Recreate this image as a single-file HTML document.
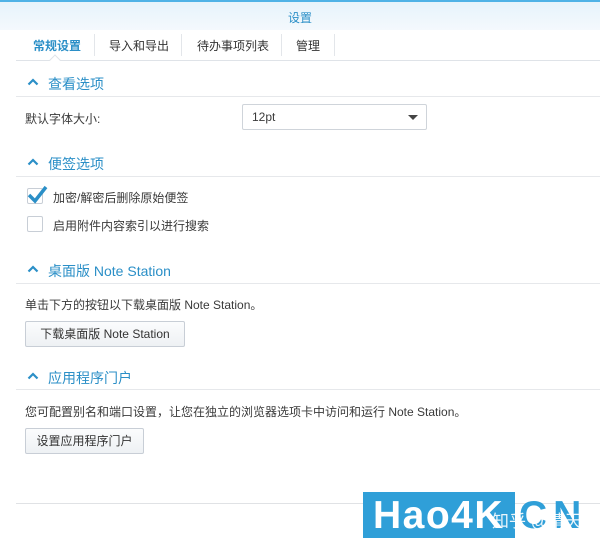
<!DOCTYPE html>
<html><head><meta charset="utf-8"><style>
*{margin:0;padding:0;box-sizing:border-box}
body{width:600px;height:543px;background:#fff;position:relative;overflow:hidden;font-family:"Liberation Sans","Noto Sans CJK SC",sans-serif;color:#3a3a3a;font-size:12px}
.a{position:absolute;white-space:nowrap}
.hdr{left:0;top:0;width:600px;height:30px;background:linear-gradient(#e6f3fb,#f4f9fd);border-top:2px solid #4fb2e6}
.tabs{left:16px;top:32px;width:584px;height:29px;border-bottom:1px solid #dfe3e8}
.tab{top:37px;font-size:12px;color:#333}
.sep{top:34px;width:1px;height:22px;background:#e3e6ea}
.h{font-size:14px;color:#2b8fc7}
.line{left:16px;width:584px;height:1px;background:#e6e8eb}
.btn{border:1px solid #c8ced6;border-radius:2px;background:linear-gradient(#fbfcfd,#eef1f4);height:26px;font-size:12px;color:#333;line-height:24px;text-align:center}
</style></head><body>
<div class="a hdr"></div>
<div class="a" style="left:288px;top:9px;font-size:12px;color:#2b8fc7">设置</div>
<div class="a tabs"></div>
<div class="a tab" style="left:33px;color:#2b8fc7;font-weight:bold">常规设置</div>
<div class="a sep" style="left:94px"></div>
<div class="a tab" style="left:109px">导入和导出</div>
<div class="a sep" style="left:181px"></div>
<div class="a tab" style="left:197px">待办事项列表</div>
<div class="a sep" style="left:281px"></div>
<div class="a tab" style="left:296px">管理</div>
<div class="a sep" style="left:334px"></div>
<div class="a" style="left:51px;top:56px;width:8px;height:8px;background:#fff;border-left:1px solid #dfe3e8;border-top:1px solid #dfe3e8;transform:rotate(45deg)"></div>

<svg class="a" style="left:27px;top:78px" width="12" height="8"><path d="M1.5 6.5 L6 2 L10.5 6.5" stroke="#2b8fc7" stroke-width="2.2" fill="none"/></svg>
<div class="a h" style="left:48px;top:74px">查看选项</div>
<div class="a line" style="top:96px"></div>
<div class="a" style="left:25px;top:110px">默认字体大小:</div>
<div class="a" style="left:242px;top:104px;width:185px;height:26px;border:1px solid #cfd4da;border-radius:2px"></div>
<div class="a" style="left:252px;top:110px;font-size:12px">12pt</div>
<div class="a" style="left:408px;top:115px;border-left:5px solid transparent;border-right:5px solid transparent;border-top:5px solid #444"></div>

<svg class="a" style="left:27px;top:158px" width="12" height="8"><path d="M1.5 6.5 L6 2 L10.5 6.5" stroke="#2b8fc7" stroke-width="2.2" fill="none"/></svg>
<div class="a h" style="left:48px;top:154px">便签选项</div>
<div class="a line" style="top:176px"></div>
<div class="a" style="left:27px;top:188px;width:16px;height:16px;border:1px solid #c8ced6;border-radius:2px"></div>
<svg class="a" style="left:25px;top:183px" width="24" height="22"><path d="M4 12 L10 18 L21 4" stroke="#2b8fc7" stroke-width="3.5" fill="none"/></svg>
<div class="a" style="left:53px;top:189px">加密/解密后删除原始便签</div>
<div class="a" style="left:27px;top:216px;width:16px;height:16px;border:1px solid #c8ced6;border-radius:2px"></div>
<div class="a" style="left:53px;top:217px">启用附件内容索引以进行搜索</div>

<svg class="a" style="left:27px;top:265px" width="12" height="8"><path d="M1.5 6.5 L6 2 L10.5 6.5" stroke="#2b8fc7" stroke-width="2.2" fill="none"/></svg>
<div class="a h" style="left:48px;top:261px">桌面版 Note Station</div>
<div class="a line" style="top:283px"></div>
<div class="a" style="left:25px;top:296px">单击下方的按钮以下载桌面版 Note Station。</div>
<div class="a btn" style="left:25px;top:321px;width:160px">下载桌面版 Note Station</div>

<svg class="a" style="left:27px;top:372px" width="12" height="8"><path d="M1.5 6.5 L6 2 L10.5 6.5" stroke="#2b8fc7" stroke-width="2.2" fill="none"/></svg>
<div class="a h" style="left:48px;top:368px">应用程序门户</div>
<div class="a line" style="top:389px"></div>
<div class="a" style="left:25px;top:403px">您可配置别名和端口设置，让您在独立的浏览器选项卡中访问和运行 Note Station。</div>
<div class="a btn" style="left:25px;top:428px;width:119px">设置应用程序门户</div>
<div class="a" style="left:16px;top:503px;width:584px;height:1px;background:#e0e2e5"></div>

<div class="a" style="left:363px;top:492px;width:152px;height:46px;background:#2f9fd8"></div>
<div class="a" style="left:373px;top:494px;font-size:39px;font-weight:bold;color:#fff;line-height:44px;letter-spacing:1.5px">Hao4K</div>
<div class="a" style="left:519px;top:494px;font-size:39px;font-weight:bold;color:#2f9fd8;line-height:44px;letter-spacing:6px">CN</div>
<div class="a" style="left:492px;top:507px;font-size:17px;color:#fff;opacity:.9">知乎 @晴天</div>
</body></html>
